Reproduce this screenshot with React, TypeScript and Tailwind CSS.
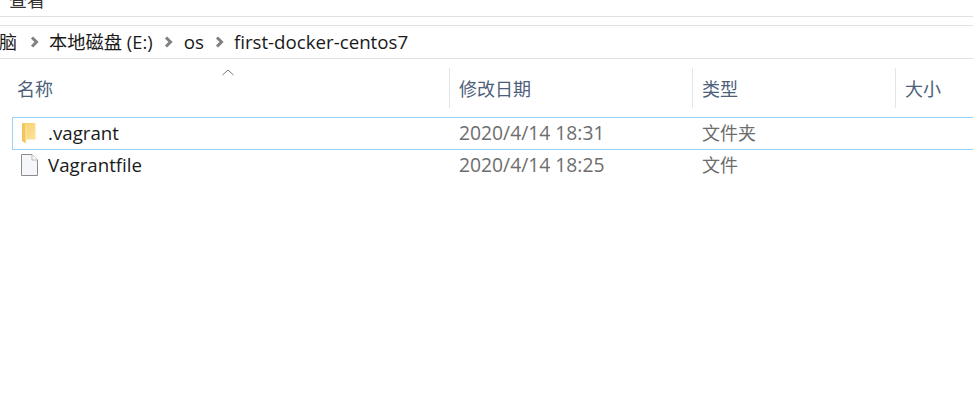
const font = "font-['Open_Sans','Noto_Sans_CJK_SC',sans-serif]"

function Chevron() {
  return (
    <svg width="9" height="12" viewBox="0 0 9 12" className="block shrink-0">
      <path d="M2 1.5 L6.5 6 L2 10.5" fill="none" stroke="#808080" strokeWidth="3" />
    </svg>
  )
}

function FolderIcon() {
  return (
    <svg width="15" height="22" viewBox="0 0 15 22" className="shrink-0">
      <defs>
        <linearGradient id="folderBody" x1="0" y1="0" x2="1" y2="1">
          <stop offset="0" stopColor="#f6cf6a" />
          <stop offset="1" stopColor="#fbe49c" />
        </linearGradient>
      </defs>
      <path d="M1 1 H14.5 V17.5 H1 Z" fill="url(#folderBody)" />
      <path d="M1 1 L5 3.5 V21.5 L1 19 Z" fill="#f3c65c" />
      <path d="M5 3.5 V21.5" stroke="#fff3c8" strokeWidth="0.8" />
    </svg>
  )
}

function FileIcon() {
  return (
    <svg width="17" height="22" viewBox="0 0 17 22" className="shrink-0">
      <path d="M0.5 0.5 H11 L16.5 6 V21.5 H0.5 Z" fill="#f5f6f9" stroke="#8c8c8c" />
      <path d="M11 0.5 V6 H16.5" fill="#fff" stroke="#b5b5b5" />
    </svg>
  )
}

function HeaderCell({ label, width, divider }: { label: string; width: string; divider?: boolean }) {
  return (
    <div className={`flex h-10 shrink-0 items-center ${width} ${divider ? 'border-l border-[#e5e5e5] pl-[9px]' : ''}`}>
      <span className="relative top-px text-[18px] text-[#4c607a]">{label}</span>
    </div>
  )
}

function FileRow({ icon, name, date, type, selected }: { icon: React.ReactNode; name: string; date: string; type: string; selected?: boolean }) {
  return (
    <div className={`flex w-[1000px] items-center border ${selected ? 'h-[33px] border-[#99d1ff]' : 'h-[30px] border-transparent'}`}>
      <div className="flex w-[436px] shrink-0 items-center">
        <div className="flex w-[34px] shrink-0 pl-[8px]">{icon}</div>
        <span className="pl-[1px] text-[18.7px] text-[#1a1a1a]">{name}</span>
      </div>
      <div className="w-[243px] shrink-0 pl-[10px] text-[19.3px] text-[#6d6d6d]">{date}</div>
      <div className="shrink-0 pl-[10px] text-[18px] text-[#6d6d6d]">{type}</div>
    </div>
  )
}

export default function App() {
  return (
    <div className={`h-[414px] w-[973px] overflow-hidden bg-white ${font}`}>
      <div className="h-[17px] overflow-hidden border-b border-[#e1e1e1]">
        <div className="-mt-[12px] pl-[9px] text-[18px] leading-[24px] text-[#333]">查看</div>
      </div>
      <div className="h-2" />
      <div className="flex h-[34px] items-center overflow-hidden border-y border-[#e1e1e1] text-[18.8px] text-[#1a1a1a]">
        <span className="-ml-[1px] w-[20px] shrink-0 text-[18px]">脑</span>
        <span className="ml-[11px]"><Chevron /></span>
        <span className="ml-[10px] text-[18.3px]">本地磁盘 (E:)</span>
        <span className="ml-[11px]"><Chevron /></span>
        <span className="ml-[11px]">os</span>
        <span className="ml-[11px]"><Chevron /></span>
        <span className="ml-[10px] text-[18.7px]">first-docker-centos7</span>
      </div>
      <div className="relative flex pl-[5px] pt-[9px]">
        <svg width="12" height="7" viewBox="0 0 12 7" className="absolute left-[222px] top-[10px]">
          <path d="M0.5 6 L6 1 L11.5 6" fill="none" stroke="#7a7a7a" />
        </svg>
        <div className="flex h-10 w-[444px] shrink-0 items-center pl-[12px]">
          <span className="relative top-px text-[18px] text-[#4c607a]">名称</span>
        </div>
        <HeaderCell label="修改日期" width="w-[243px]" divider />
        <HeaderCell label="类型" width="w-[203px]" divider />
        <HeaderCell label="大小" width="w-[78px]" divider />
      </div>
      <div className="pl-[12px] pt-[9px]">
        <FileRow icon={<FolderIcon />} name=".vagrant" date="2020/4/14 18:31" type="文件夹" selected />
        <FileRow icon={<FileIcon />} name="Vagrantfile" date="2020/4/14 18:25" type="文件" />
      </div>
    </div>
  )
}
